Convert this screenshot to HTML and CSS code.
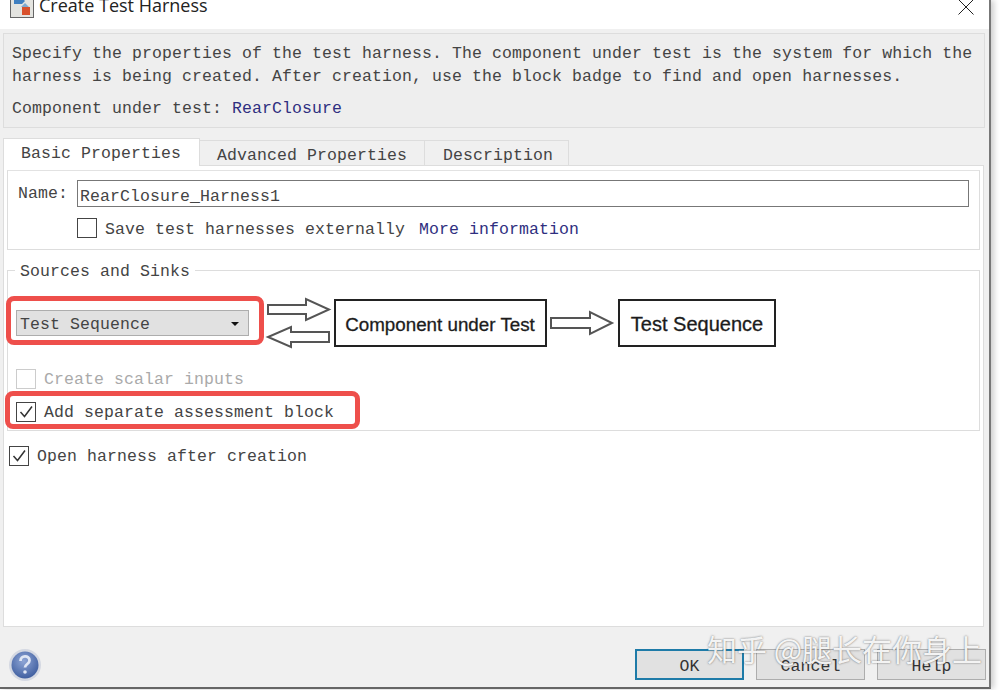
FILE: index.html
```html
<!DOCTYPE html>
<html lang="en">
<head>
    <meta charset="UTF-8">
    <title>Create Test Harness</title>
    <link rel="stylesheet" href="styles.css">
</head>
<body>
    <div class="dialog">
        <!-- title bar -->
        <div class="title-bar">
            <svg class="title-icon" width="24" height="24" viewBox="0 0 24 24">
                <rect x="0.5" y="0.5" width="23" height="23" fill="#e4e4e0" stroke="#666"/>
                <path d="M4 4h8l3 3-3 3H4z" fill="#3f7fc0"/>
                <path d="M15 9l4 4h-8z" fill="#7fa9cf"/>
                <rect x="12" y="13" width="8" height="8" fill="#d9512c"/>
            </svg>
            <span class="title-text">Create Test Harness</span>
            <svg class="close-icon" width="16" height="16" viewBox="0 0 16 16">
                <path d="M0.5 0.5L15.5 15.5M15.5 0.5L0.5 15.5" stroke="#222" fill="none"/>
            </svg>
        </div>

        <!-- description -->
        <div class="info-box">
            <p class="info-text">Specify the properties of the test harness. The component under test is the system for which the harness is being created. After creation, use the block badge to find and open harnesses.</p>
            <p class="info-cut">Component under test: <a class="link">RearClosure</a></p>
        </div>

        <!-- tabs -->
        <ul class="tab-list">
            <li class="tab tab-active">Basic Properties</li>
            <li class="tab tab-second">Advanced Properties</li>
            <li class="tab tab-third">Description</li>
        </ul>

        <div class="tab-panel">
            <div class="name-box">
                <div class="name-row">
                    <label class="name-label">Name:</label>
                    <div class="name-input">RearClosure_Harness1</div>
                </div>
                <div class="check-row save-row">
                    <span class="check-box"></span>
                    <span>Save test harnesses externally</span>
                    <a class="link more-link">More information</a>
                </div>
            </div>

            <fieldset class="sources-box">
                <legend class="sources-title">Sources and Sinks</legend>
                <div class="source-row">
                    <div class="select-box">
                        <span>Test Sequence</span>
                        <span class="select-arrow"></span>
                    </div>
                    <svg class="diagram" width="515" height="56" viewBox="0 0 515 56">
                        <g fill="#fff" stroke="#555" stroke-width="2">
                            <path d="M3 9H41V3L64 13.500 41 24V18H3z"/>
                            <path d="M64 36H26V31L3 41 26 51V46H64z"/>
                            <path d="M286 22H325V16L347 27 325 38V32H286z"/>
                        </g>
                        <g fill="#fff" stroke="#222" stroke-width="2">
                            <rect x="70" y="4" width="211" height="46"/>
                            <rect x="354" y="4" width="156" height="46"/>
                        </g>
                        <text class="diagram-text" x="175" y="35" text-anchor="middle">Component under Test</text>
                        <text class="diagram-text diagram-text-big" x="432" y="35" text-anchor="middle">Test Sequence</text>
                    </svg>
                </div>
                <div class="check-row scalar-row">
                    <span class="check-box check-off"></span>
                    <span>Create scalar inputs</span>
                </div>
                <div class="check-row assess-row">
                    <span class="check-box">
                        <svg width="18" height="18" viewBox="0 0 18 18"><path d="M3.500 9L7.500 13.500 15 3.500" fill="none" stroke="#333" stroke-width="1.500"/></svg>
                    </span>
                    <span>Add separate assessment block</span>
                </div>
                <div class="mark mark-select"></div>
                <div class="mark mark-assess"></div>
            </fieldset>

            <div class="check-row open-row">
                <span class="check-box">
                    <svg width="18" height="18" viewBox="0 0 18 18"><path d="M3.500 9L7.500 13.500 15 3.500" fill="none" stroke="#333" stroke-width="1.500"/></svg>
                </span>
                <span>Open harness after creation</span>
            </div>
        </div>

        <!-- bottom buttons -->
        <div class="button-bar">
            <svg class="help-icon" width="34" height="34" viewBox="0 0 34 34">
                <defs>
                    <radialGradient id="helpFill" cx="45%" cy="35%" r="70%">
                        <stop offset="0" stop-color="#8fa6d6"/>
                        <stop offset="1" stop-color="#3a5a9c"/>
                    </radialGradient>
                </defs>
                <circle cx="17" cy="17" r="16" fill="#d4d8e2"/>
                <circle cx="17" cy="17" r="13.500" fill="url(#helpFill)"/>
                <path d="M12.500 13c0-6 9-6 9-.5 0 3.500-4.500 3.500-4.500 7" fill="none" stroke="#dfe6f4" stroke-width="2.800"/>
                <circle cx="17" cy="24" r="1.800" fill="#dfe6f4"/>
            </svg>
            <div class="buttons">
                <button class="btn btn-default">OK</button>
                <button class="btn">Cancel</button>
                <button class="btn">Help</button>
            </div>
        </div>
    </div>
    <div class="watermark">知乎 @腿长在你身上</div>
</body>
</html>
```

FILE: styles.css
```css
/*global*/
* {
    margin: 0;
    padding: 0;
    box-sizing: border-box;
}

html, body {
    width: 1008px;
    height: 690px;
    overflow: hidden;
    background-color: #fff;
}

body {
    position: relative;
    font-family: "Liberation Mono", "DejaVu Sans Mono", monospace;
    font-size: 16.5px;
    letter-spacing: 0.1px;
    color: #444;
}

.link {
    color: #2f2f80;
}

/*dialog*/
.dialog {
    width: 991px;
    height: 689px;
    background-color: #f0f0f0;
    border-right: 2px solid #777;
    border-bottom: 2px solid #666;
    box-shadow: 3px 0 6px rgba(0, 0, 0, 0.2);
    overflow: hidden;
}

.title-bar {
    height: 29px;
    background-color: #fff;
    display: flex;
    align-items: flex-end;
    padding: 0 15px 12px 10px;
}

.title-icon {
    flex: none;
    margin-bottom: -1px;
}

.title-text {
    margin-left: 5px;
    font-family: "Open Sans", "Noto Sans", sans-serif;
    font-size: 18px;
    line-height: 23px;
    letter-spacing: 0;
    color: #222;
}

.close-icon {
    margin-left: auto;
    margin-bottom: 2px;
}

/*info*/
.info-box {
    height: 95px;
    margin: 4px 4px 0 3px;
    padding: 8px 8px 0 8px;
    background-color: #eee;
    border: 1px solid #ddd;
}

.info-text {
    line-height: 23px;
}

.info-cut {
    margin-top: 9px;
    line-height: 23px;
}

/*tabs*/
.tab-list {
    display: flex;
    list-style: none;
    align-items: flex-end;
    height: 27px;
    margin: 10px 0 0 3px;
    position: relative;
}

.tab {
    height: 25px;
    line-height: 29px;
    background-color: #f0f0f0;
    border: 1px solid #ddd;
    border-bottom: 0;
    border-left: 0;
    white-space: nowrap;
}

.tab-active {
    width: 197px;
    height: 28px;
    margin-bottom: -1px;
    padding-left: 17px;
    background-color: #fff;
    border-left: 1px solid #ddd;
    position: relative;
}

.tab-second {
    width: 225px;
    padding-left: 17px;
}

.tab-third {
    width: 144px;
    padding-left: 18px;
}

.tab-panel {
    width: 981px;
    height: 462px;
    margin-left: 3px;
    padding: 4px 3px 0 3px;
    background-color: #fff;
    border: 1px solid #ddd;
}

.name-box {
    width: 973px;
    height: 80px;
    border: 1px solid #ddd;
    border-top-color: #e2e2e2;
}

.name-row {
    display: flex;
    align-items: center;
    padding: 9px 10px 0 10px;
}

.name-label {
    width: 59px;
    margin-top: -1px;
}

.name-input {
    width: 892px;
    height: 27px;
    line-height: 27px;
    padding: 2px 0 0 2px;
    border: 1px solid #777;
}

.check-row {
    display: flex;
    align-items: center;
    gap: 8px;
    line-height: 20px;
    white-space: nowrap;
}

.check-box {
    flex: none;
    width: 20px;
    height: 20px;
    margin-bottom: 2px;
    border: 1px solid #444;
    background-color: #fff;
}

.check-box svg {
    display: block;
}

.check-off {
    border-color: #ccc;
}

.save-row {
    padding: 11px 0 0 69px;
}

.save-row .check-box {
    margin-bottom: 4px;
}

.more-link {
    margin-left: 6px;
}

/*sources*/
.sources-box {
    position: relative;
    width: 973px;
    height: 169px;
    margin-top: 12px;
    padding: 0 0 0 8px;
    border: 1px solid #ddd;
}

.sources-title {
    margin-left: -1px;
    padding: 4px 5px 0;
    line-height: 12px;
}

.source-row {
    display: flex;
    align-items: flex-start;
    margin-top: 18px;
}

.select-box {
    width: 233px;
    height: 26px;
    margin-top: 14px;
    padding: 2px 9px 0 3px;
    display: flex;
    justify-content: space-between;
    align-items: center;
    background-color: #e1e1e1;
    border: 1px solid #adadad;
}

.select-arrow {
    width: 0;
    height: 0;
    border-left: 4px solid transparent;
    border-right: 4px solid transparent;
    border-top: 4px solid #111;
}

.diagram {
    flex: none;
    margin-left: 16px;
}

.diagram-text {
    font-family: "Liberation Sans", Arial, sans-serif;
    font-size: 18.800px;
    letter-spacing: 0;
    fill: #1c1c1c;
    stroke: #1c1c1c;
    stroke-width: 0.300px;
}

.diagram-text-big {
    font-size: 20px;
}

.scalar-row {
    margin-top: 17px;
    color: #aaa;
}

.assess-row {
    margin-top: 11px;
}

.mark {
    position: absolute;
    border: 5px solid #ee4f4b;
    border-radius: 8px;
}

.mark-select {
    left: -2px;
    top: 18px;
    width: 258px;
    height: 49px;
}

.mark-assess {
    left: -3px;
    top: 113px;
    width: 355px;
    height: 38px;
}

.open-row {
    margin-top: 15px;
    margin-left: 2px;
}

/*buttons*/
.button-bar {
    display: flex;
    justify-content: space-between;
    align-items: center;
    height: 60px;
    padding: 0 3px 0 8px;
}

.help-icon {
    margin-top: 16px;
}

.buttons {
    display: flex;
    gap: 12px;
    margin-top: 15px;
}

.btn {
    width: 109px;
    height: 31px;
    padding-top: 4px;
    font-family: "Liberation Mono", "DejaVu Sans Mono", monospace;
    font-size: 16.5px;
    letter-spacing: 0.1px;
    color: #333;
    background-color: #e1e1e1;
    border: 1px solid #adadad;
}

.btn-default {
    border: 2px solid #1e7ba8;
}

/*watermark*/
.watermark {
    position: absolute;
    left: 707px;
    top: 629px;
    font-family: "Noto Sans CJK SC", sans-serif;
    font-size: 30px;
    line-height: 38px;
    letter-spacing: 0;
    white-space: nowrap;
    color: rgba(255, 255, 255, 0.92);
    text-shadow: 0 0 2px rgba(70, 70, 70, 0.8);
}
```
